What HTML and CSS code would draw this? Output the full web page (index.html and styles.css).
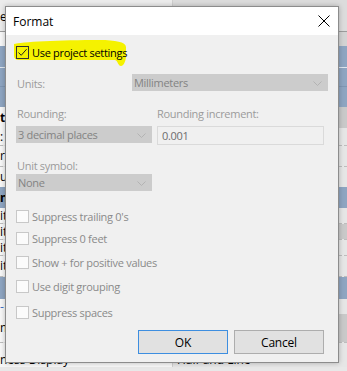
FILE: index.html
```html
<!doctype html>
<html>
<head>
<meta charset="utf-8">
<title>Format</title>
<link rel="stylesheet" href="styles.css">
</head>
<body>
	<div class="panel">
		<div class="row r1"><span class="name">er</span><span class="value"></span></div>
		<div class="row r2"><span class="name"></span><span class="value"></span></div>
		<div class="row group r3"><span class="name"></span><span class="value"></span></div>
		<div class="row group r4"><span class="name"></span><span class="value"></span></div>
		<div class="row group r5"><span class="name"></span><span class="value"></span></div>
		<div class="row r6"><span class="name bold">t</span><span class="value grey"></span></div>
		<div class="row r7"><span class="name">:</span><span class="value"></span></div>
		<div class="row r8"><span class="name">re</span><span class="value"></span></div>
		<div class="row r9"><span class="name">u</span><span class="value"></span></div>
		<div class="row group r10"><span class="name bold">n</span><span class="value"></span></div>
		<div class="row r11"><span class="name">it</span><span class="value"></span></div>
		<div class="row r12"><span class="name">it</span><span class="value grey"></span></div>
		<div class="row r13"><span class="name">it</span><span class="value"></span></div>
		<div class="row r14"><span class="name">it</span><span class="value"></span></div>
		<div class="row group r15"><span class="name"></span><span class="value"></span></div>
		<div class="row r16"><span class="name link">-</span><span class="value"></span></div>
		<div class="row r17"><span class="name">m</span><span class="value grey"></span></div>
		<div class="row r18"><span class="name">ness Display</span><span class="value">Half and Line</span></div>
	</div>

	<div class="dialog">
		<div class="titlebar">
			<span class="title">Format</span>
			<svg class="close" width="12" height="12" viewBox="0 0 12 12">
				<path d="M0.5 0.5 L11.5 11.5 M11.5 0.5 L0.5 11.5" stroke="#000" stroke-width="1" fill="none"/>
			</svg>
		</div>

		<div class="content">
			<div class="check-row project">
				<svg class="marker" width="116" height="28" viewBox="0 0 116 28">
					<path d="M2,5 C8,3 48,1 88,1 C103,1 114,3 114,8 L114,17 C114,21 112,27 109,27 C106,27 106,22 103,21 L8,21 C3,21 2,19 2,16 Z" fill="#f5f200"/>
				</svg>
				<span class="box checked">
					<svg width="11" height="11" viewBox="0 0 11 11">
						<path d="M1.5 5.5 L4.2 8.3 L9.6 2.2" stroke="#222" stroke-width="1" fill="none"/>
					</svg>
				</span>
				<span class="check-text on">Use project settings</span>
			</div>

			<div class="units">
				<span class="label">Units:</span>
				<div class="select wide">
					<span>Millimeters</span>
					<svg class="chevron" width="9" height="5" viewBox="0 0 9 5"><path d="M0.5 0.5 L4.5 4.5 L8.5 0.5" stroke="#b3b3b3" fill="none"/></svg>
				</div>
			</div>

			<div class="pair labels">
				<span class="label">Rounding:</span>
				<span class="label">Rounding increment:</span>
			</div>
			<div class="pair fields">
				<div class="select">
					<span>3 decimal places</span>
					<svg class="chevron" width="9" height="5" viewBox="0 0 9 5"><path d="M0.5 0.5 L4.5 4.5 L8.5 0.5" stroke="#b3b3b3" fill="none"/></svg>
				</div>
				<div class="textbox">0.001</div>
			</div>

			<div class="label symbol">Unit symbol:</div>
			<div class="select short">
				<span>None</span>
				<svg class="chevron" width="9" height="5" viewBox="0 0 9 5"><path d="M0.5 0.5 L4.5 4.5 L8.5 0.5" stroke="#b3b3b3" fill="none"/></svg>
			</div>

			<div class="options">
				<div class="check-row"><span class="box"></span><span class="check-text">Suppress trailing 0's</span></div>
				<div class="check-row feet"><span class="box"></span><span class="check-text">Suppress 0 feet</span></div>
				<div class="check-row"><span class="box"></span><span class="check-text">Show + for positive values</span></div>
				<div class="check-row"><span class="box"></span><span class="check-text">Use digit grouping</span></div>
				<div class="check-row spaces"><span class="box"></span><span class="check-text">Suppress spaces</span></div>
			</div>

			<div class="buttons">
				<button class="btn default">OK</button>
				<button class="btn">Cancel</button>
			</div>
		</div>
	</div>
</body>
</html>
```

FILE: styles.css
```css
body {
	margin: 0;
	font-family: "Open Sans", "Noto Sans", sans-serif;
	font-size: 11px;
	letter-spacing: -0.3px;
	background: #e8e8e8;
	overflow: hidden;
}

/* property panel behind the dialog */
.panel {
	width: 347px;
	height: 371px;
}

.row {
	display: grid;
	grid-template-columns: 172px 1fr;
	color: #000;
	font-size: 12px;
	letter-spacing: 0;
	line-height: 1;
}

.row .name {
	background: #f7f7f7;
	display: flex;
	align-items: center;
	white-space: nowrap;
	overflow: hidden;
}

.row .value {
	background: #e6e6e6;
	display: flex;
	align-items: center;
	padding-left: 4px;
	border-left: 1px solid #cfcfcf;
}

.row .value.grey {
	background: #c9c9c9;
}

.row.group .name,
.row.group .value {
	background: #8ea5c1;
	border-left: none;
}

.bold {
	font-weight: bold;
}

.link {
	color: #3a6fc4;
}

.r1 { height: 31px; border-bottom: 1px solid #9c9c9c; }
.r1 .name { background: #ececec; padding-top: 2px; }
.r1 .value { background: #dcdcdc; }
.r2 { height: 14px; }
.r2 .value { background: #d3d3d3; }
.r3 { height: 21px; }
.r4 { height: 18px; border-top: 1px solid #dfe6ee; }
.r5 { height: 20px; border-top: 1px solid #7f96b3; }
.r6 { height: 21px; }
.r7 { height: 17px; border-bottom: 1px dashed #bdbdbd; }
.r8 { height: 20px; border-bottom: 1px dashed #bdbdbd; }
.r9 { height: 20px; }
.r10 { height: 21px; }
.r11 { height: 15px; border-bottom: 1px dashed #bdbdbd; }
.r12 { height: 15px; border-bottom: 1px dashed #bdbdbd; }
.r13 { height: 15px; border-bottom: 1px dashed #bdbdbd; }
.r14 { height: 20px; border-bottom: 1px dashed #bdbdbd; }
.r15 { height: 22px; }
.r16 { height: 15px; }
.r17 { height: 28px; border-bottom: 1px dashed #bdbdbd; }
.r18 { height: 24px; }
.r18 .name, .r18 .value { align-items: flex-end; padding-bottom: 1px; }

/* the dialog window */
.dialog {
	position: absolute;
	left: 5px;
	top: 6px;
	width: 332px;
	height: 355px;
	background: #f0f0f0;
	border: 1px solid #8c8c8c;
	box-shadow: 0 0 5px rgba(0, 0, 0, 0.25);
}

.titlebar {
	height: 28px;
	background: #fff;
	display: flex;
	align-items: center;
	justify-content: space-between;
	padding: 0 8px 0 7px;
}

.title {
	font-size: 12px;
	letter-spacing: 0;
	color: #000;
}

.content {
	padding: 0 10px;
}

.check-row {
	position: relative;
	display: flex;
	align-items: center;
	gap: 3px;
	height: 16px;
}

.check-row.project {
	margin-top: 9px;
}

.marker {
	position: absolute;
	left: -4px;
	top: -5px;
}

.box {
	position: relative;
	width: 11px;
	height: 11px;
	border: 1px solid #c8c8c8;
	background: #fbfbfb;
	display: flex;
	align-items: center;
	justify-content: center;
}

.box.checked {
	background: transparent;
	border-color: #333;
}

.check-text {
	position: relative;
	color: #8a8a8a;
	white-space: nowrap;
}

.check-text.on {
	color: #000;
}

.label {
	color: #9b9b9b;
	white-space: nowrap;
	line-height: 16px;
}

.units {
	display: grid;
	grid-template-columns: 116px 196px;
	align-items: center;
	margin-top: 13px;
}

.units .label {
	padding-top: 3px;
	padding-left: 1px;
}

.select {
	height: 17px;
	background: #cccccc;
	color: #838383;
	display: flex;
	align-items: center;
	justify-content: space-between;
	padding: 0 6px 0 2px;
	box-sizing: border-box;
}

.chevron {
	margin-top: 1px;
}

.pair {
	display: grid;
	grid-template-columns: 136px 167px;
	gap: 5px;
}

.pair.labels {
	margin-top: 14px;
}

.pair.labels .label:first-child {
	padding-left: 1px;
}

.pair.fields {
	margin-top: 4px;
	align-items: start;
}

.textbox {
	height: 19px;
	box-sizing: border-box;
	border: 1px solid #dadada;
	color: #6d6d6d;
	padding: 1px 4px 0;
	line-height: 15px;
}

.label.symbol {
	margin-top: 13px;
	padding-left: 1px;
}

.select.short {
	width: 136px;
}

.options {
	margin-top: 17px;
	display: flex;
	flex-direction: column;
	gap: 8px;
}

.options .check-row.feet {
	margin-top: -2px;
}

.options .check-row.spaces {
	margin-top: 2px;
}

.buttons {
	margin-top: 10px;
	display: flex;
	justify-content: flex-end;
	gap: 6px;
	padding-right: 4px;
}

.btn {
	width: 90px;
	height: 24px;
	background: #e1e1e1;
	border: 1px solid #adadad;
	font-family: "Open Sans", "Noto Sans", sans-serif;
	font-size: 12px;
	letter-spacing: -0.2px;
	color: #000;
	padding: 0;
}

.btn.default {
	border-color: #3d8ee0;
}
```
